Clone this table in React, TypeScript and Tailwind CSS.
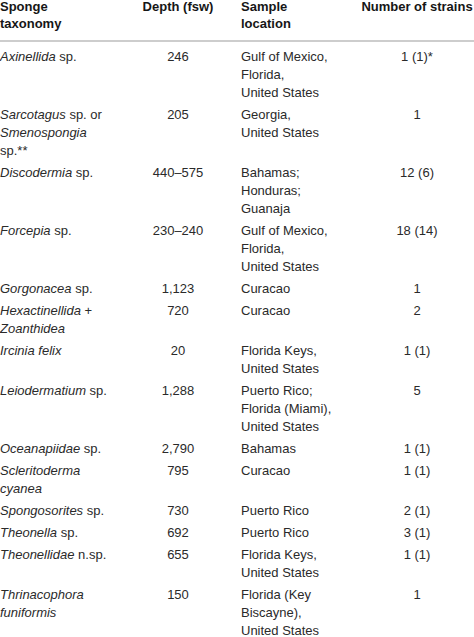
import React from "react";

type Row = {
  taxon: React.ReactNode[];
  depth: string;
  location: string[];
  strains: string;
};

const I = ({ children }: { children: React.ReactNode }) => <i>{children}</i>;

const rows: Row[] = [
  { taxon: [<><I>Axinellida</I> sp.</>], depth: "246", location: ["Gulf of Mexico,", "Florida,", "United States"], strains: "1 (1)*" },
  {
    taxon: [<><I>Sarcotagus</I> sp. or</>, <I>Smenospongia</I>, <>sp.**</>],
    depth: "205",
    location: ["Georgia,", "United States"],
    strains: "1",
  },
  { taxon: [<><I>Discodermia</I> sp.</>], depth: "440–575", location: ["Bahamas;", "Honduras;", "Guanaja"], strains: "12 (6)" },
  { taxon: [<><I>Forcepia</I> sp.</>], depth: "230–240", location: ["Gulf of Mexico,", "Florida,", "United States"], strains: "18 (14)" },
  { taxon: [<><I>Gorgonacea</I> sp.</>], depth: "1,123", location: ["Curacao"], strains: "1" },
  { taxon: [<><I>Hexactinellida</I> +</>, <I>Zoanthidea</I>], depth: "720", location: ["Curacao"], strains: "2" },
  { taxon: [<I>Ircinia felix</I>], depth: "20", location: ["Florida Keys,", "United States"], strains: "1 (1)" },
  { taxon: [<><I>Leiodermatium</I> sp.</>], depth: "1,288", location: ["Puerto Rico;", "Florida (Miami),", "United States"], strains: "5" },
  { taxon: [<><I>Oceanapiidae</I> sp.</>], depth: "2,790", location: ["Bahamas"], strains: "1 (1)" },
  { taxon: [<I>Scleritoderma</I>, <I>cyanea</I>], depth: "795", location: ["Curacao"], strains: "1 (1)" },
  { taxon: [<><I>Spongosorites</I> sp.</>], depth: "730", location: ["Puerto Rico"], strains: "2 (1)" },
  { taxon: [<><I>Theonella</I> sp.</>], depth: "692", location: ["Puerto Rico"], strains: "3 (1)" },
  { taxon: [<><I>Theonellidae</I> n.sp.</>], depth: "655", location: ["Florida Keys,", "United States"], strains: "1 (1)" },
  { taxon: [<I>Thrinacophora</I>, <I>funiformis</I>], depth: "150", location: ["Florida (Key", "Biscayne),", "United States"], strains: "1" },
];

export default function App() {
  return (
    <div
      className="w-[474px] h-[637px] overflow-hidden bg-white text-[13px] text-[#2a2a2a]"
      style={{ fontFamily: '"Liberation Sans", Arial, sans-serif' }}
    >
      {/* header */}
      <div className="-mt-[2px] grid grid-cols-[118px_120px_122px_114px] border-b-2 border-[#cdcdcd] pb-[8px] font-bold leading-[17px] text-[#161616]">
        <div>
          <div>Sponge</div>
          <div>taxonomy</div>
        </div>
        <div className="text-center">Depth (fsw)</div>
        <div className="pl-[3px]">
          <div>Sample</div>
          <div>location</div>
        </div>
        <div className="whitespace-nowrap text-center">Number of strains</div>
      </div>

      {/* body */}
      <div className="pt-[4px] leading-[18px]">
        {rows.map((r, i) => (
          <div key={i} className="grid grid-cols-[118px_120px_122px_114px] py-[2px]">
            <div className="whitespace-nowrap">
              {r.taxon.map((t, j) => (
                <div key={j}>{t}</div>
              ))}
            </div>
            <div className="text-center">{r.depth}</div>
            <div className="whitespace-nowrap pl-[3px]">
              {r.location.map((l, j) => (
                <div key={j}>{l}</div>
              ))}
            </div>
            <div className="text-center">{r.strains}</div>
          </div>
        ))}
      </div>
    </div>
  );
}
